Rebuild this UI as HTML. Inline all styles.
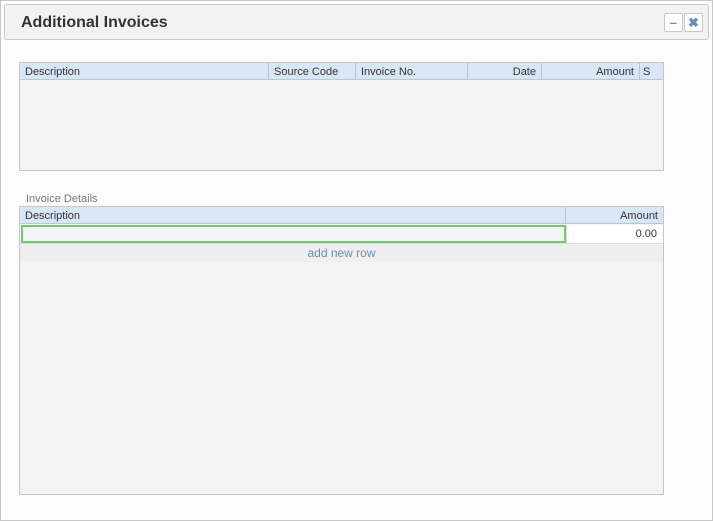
<!DOCTYPE html>
<html><head><style>
*{box-sizing:border-box;margin:0;padding:0}
body{width:713px;height:521px;background:#fff;font-family:"Liberation Sans",sans-serif;position:relative;overflow:hidden}
.outer{position:absolute;left:0;top:0;width:713px;height:521px;border:1px solid #c8c8c8;background:#fcfcfc}
.hdr{position:absolute;left:4px;top:4px;width:705px;height:36px;border:1px solid #c9c9c9;border-radius:3px;background:#f2f2f2}
.hdr h1{position:absolute;left:16px;top:9px;font-size:16px;font-weight:bold;color:#333}
.btn{position:absolute;top:8px;width:19px;height:19px;border:1px solid #c9c9c9;border-radius:2px;background:#fff;color:#6a8bbd;font-size:13px;font-weight:bold;text-align:center;line-height:17px}
.t{position:absolute;border:1px solid #c6c6c6;background:#f4f4f4}
.th{position:absolute;top:0;height:17px;background:#dae6f5;border-bottom:1px solid #b8c6d8;font-size:11px;color:#333;line-height:19px}
.th span{position:absolute;top:0;padding:0 5px;border-right:1px solid #b8c6d8;height:17px}
</style></head><body>
<div class="outer"></div>
<div class="hdr"><h1>Additional Invoices</h1>
<div class="btn" style="left:659px">–</div><div class="btn" style="left:679px">✖</div></div>
<div class="t" style="left:19px;top:62px;width:645px;height:109px">
<div class="th" style="left:0;width:643px">
<span style="left:0;width:249px">Description</span>
<span style="left:249px;width:87px">Source Code</span>
<span style="left:336px;width:112px">Invoice No.</span>
<span style="left:448px;width:74px;text-align:right">Date</span>
<span style="left:522px;width:98px;text-align:right">Amount</span>
<span style="left:620px;width:23px;border:none;padding-left:3px">S</span>
</div></div>
<div style="position:absolute;left:26px;top:193px;font-size:11px;color:#777">Invoice Details</div>
<div class="t" style="left:19px;top:206px;width:645px;height:289px">
<div class="th" style="left:0;width:643px">
<span style="left:0;width:546px">Description</span>
<span style="left:546px;width:97px;border:none;text-align:right">Amount</span>
</div>
<div style="position:absolute;left:1px;top:18px;width:545px;height:18px;border:2px solid #72c772;background:#f4f4f4"></div>
<div style="position:absolute;left:546px;top:18px;width:97px;height:18px;background:#fff;border-left:1px solid #ddd;font-size:11px;text-align:right;padding-right:6px;line-height:18px;color:#333">0.00</div>
<div style="position:absolute;left:0;top:36px;width:643px;height:19px;background:#efefef;border-top:1px solid #ddd;text-align:center;font-size:12px;color:#6a8bbd;line-height:18px">add new row</div>
</div>
</body></html>
